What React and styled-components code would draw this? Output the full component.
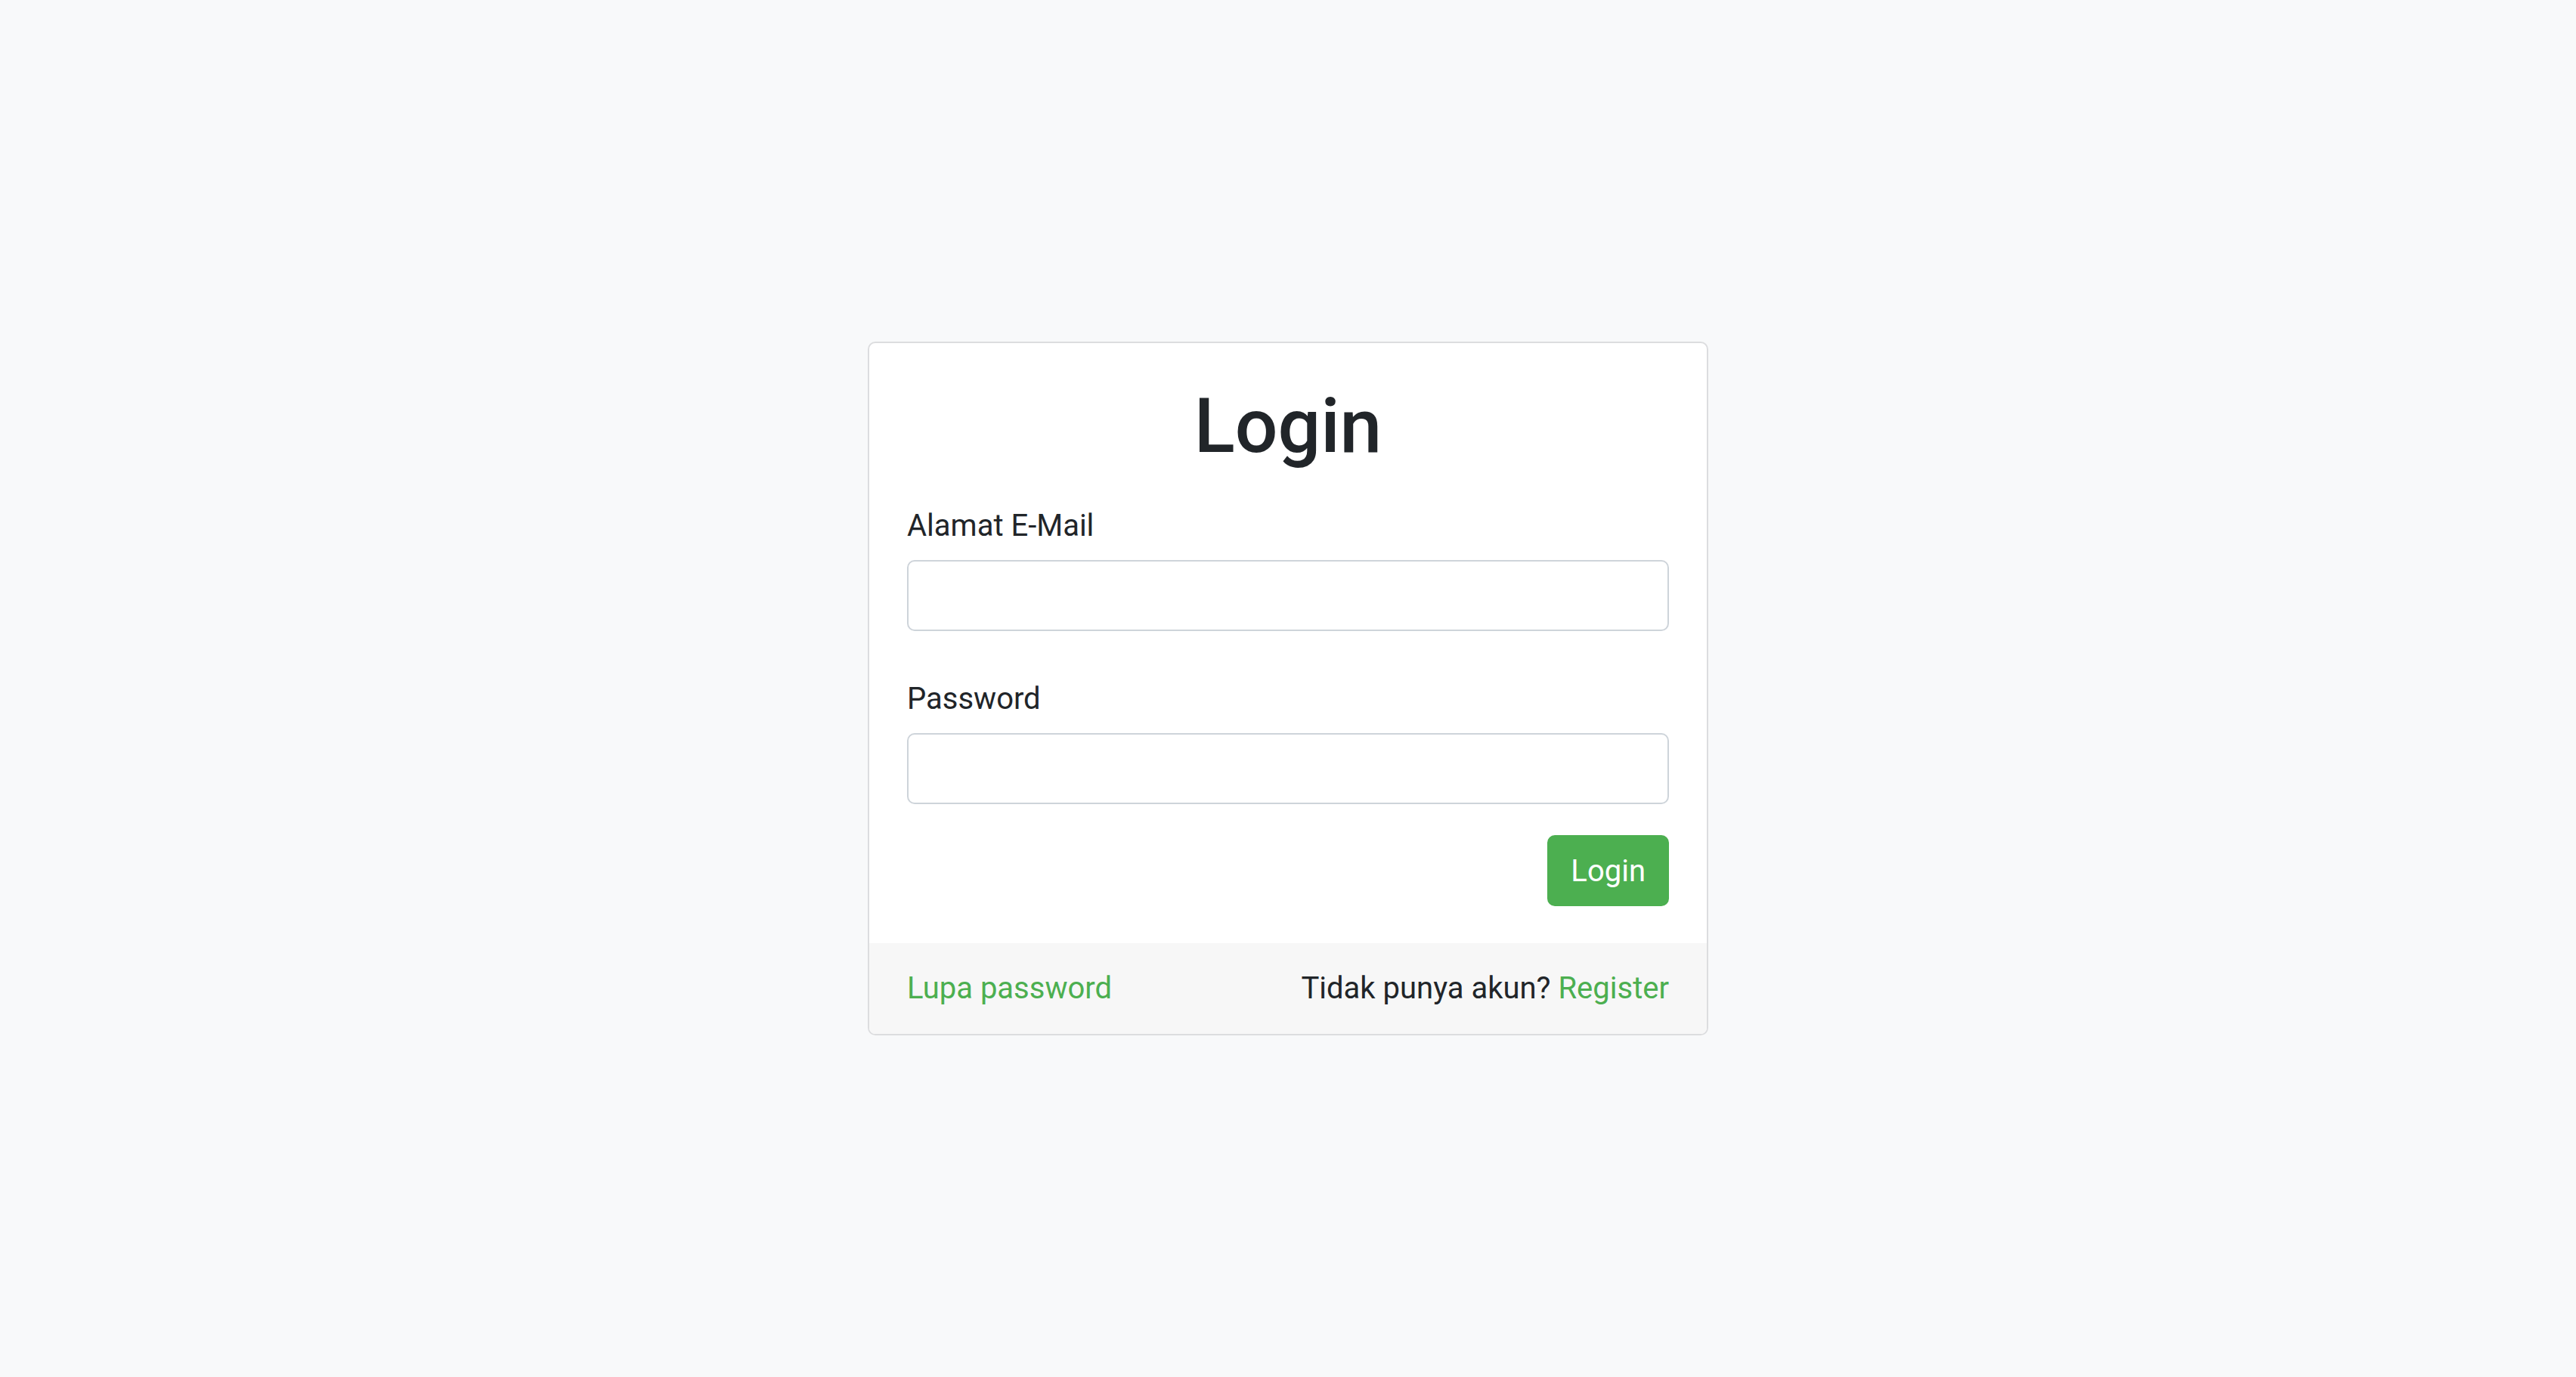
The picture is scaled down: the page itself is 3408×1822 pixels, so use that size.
import React from "react";
import styled, {createGlobalStyle} from "styled-components";

const GlobalStyle = createGlobalStyle`
  * {
    box-sizing: border-box;
  }
  body {
    margin: 0;
    background: #f8f9fa;
    font-family: Roboto, "Liberation Sans", Arial, sans-serif;
    color: #212529;
  }
`

const StyledPage = styled.div`
  min-height: 100vh;
  display: flex;
  align-items: center;
  justify-content: center;
`

const StyledCard = styled.div`
  width: 1112px;
  background: #fff;
  border: 2px solid #dcdddf;
  border-radius: 10px;
  overflow: hidden;
`

const StyledBody = styled.form`
  padding: 50px 50px 49px;
  display: flex;
  flex-direction: column;
`

const StyledH1 = styled.h1`
  margin: 0 0 37px;
  font-size: 100px;
  line-height: 120px;
  font-weight: 500;
  text-align: center;
`

const StyledGroup = styled.div`
  display: flex;
  flex-direction: column;
  margin-bottom: ${props => props.last ? "0" : "55px"};
`

const StyledLabel = styled.label`
  font-size: 40px;
  line-height: 60px;
  padding-top: 5px;
  margin-bottom: 15px;
`

const StyledInput = styled.input`
  height: 94px;
  width: 100%;
  border: 2px solid #ced4da;
  border-radius: 10px;
  padding: 0 30px;
  font-size: 40px;
  font-family: inherit;
  color: #495057;
  background: #fff;
  outline: none;
`

const StyledActions = styled.div`
  display: flex;
  justify-content: flex-end;
  margin-top: 41px;
`

const StyledButton = styled.button`
  height: 94px;
  padding: 0 29px;
  border: 2px solid #4caf50;
  border-radius: 10px;
  background: #4caf50;
  color: #fff;
  font-size: 40px;
  font-family: inherit;
  cursor: pointer;
`

const StyledFooter = styled.div`
  display: flex;
  justify-content: space-between;
  align-items: center;
  padding: 30px 50px;
  background: #f7f7f7;
  font-size: 40px;
  line-height: 60px;
`

const StyledLink = styled.a`
  color: #4caf50;
  text-decoration: none;
`

const App = () => {
    const [email, setEmail] = React.useState("");
    const [password, setPassword] = React.useState("");

    return (
        <StyledPage>
            <GlobalStyle/>
            <StyledCard>
                <StyledBody onSubmit={e => e.preventDefault()}>
                    <StyledH1>Login</StyledH1>
                    <StyledGroup>
                        <StyledLabel htmlFor="email">Alamat E-Mail</StyledLabel>
                        <StyledInput id="email" type="email" value={email} onChange={e => setEmail(e.target.value)}/>
                    </StyledGroup>
                    <StyledGroup last>
                        <StyledLabel htmlFor="password">Password</StyledLabel>
                        <StyledInput id="password" type="password" value={password} onChange={e => setPassword(e.target.value)}/>
                    </StyledGroup>
                    <StyledActions>
                        <StyledButton type="submit">Login</StyledButton>
                    </StyledActions>
                </StyledBody>
                <StyledFooter>
                    <StyledLink href="#">Lupa password</StyledLink>
                    <span>Tidak punya akun? <StyledLink href="#">Register</StyledLink></span>
                </StyledFooter>
            </StyledCard>
        </StyledPage>
    );
}

export default App;
